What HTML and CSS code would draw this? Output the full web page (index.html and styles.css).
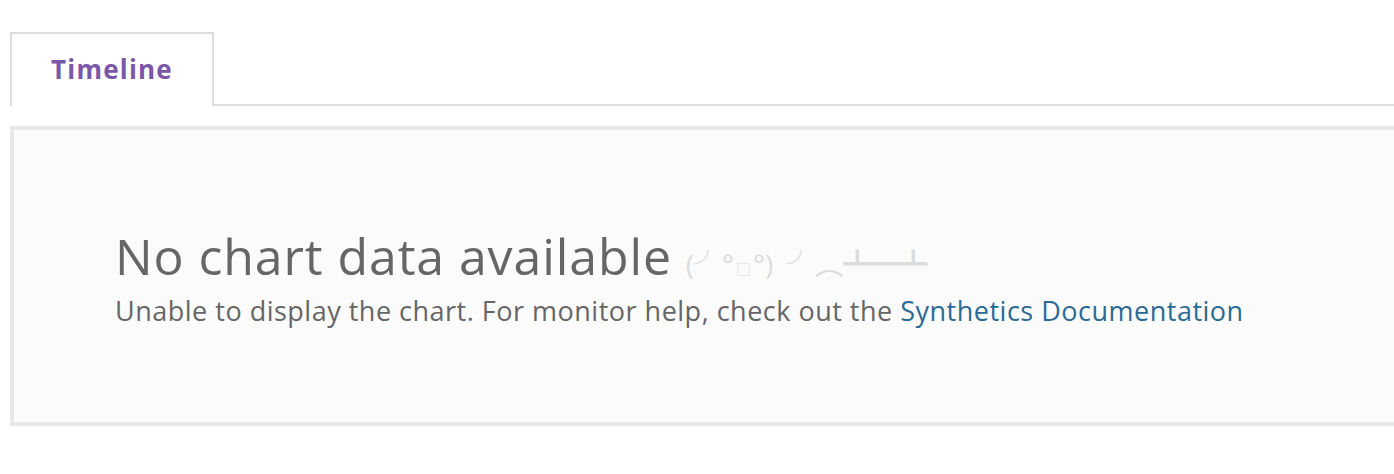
FILE: index.html
```html
<!DOCTYPE html>
<html>
<head>
<meta charset="utf-8">
<link rel="stylesheet" href="styles.css">
</head>
<body>
<div class="page">
  <div class="tabs">
    <div class="tab">Timeline</div>
    <div class="tabs-rest"></div>
  </div>
  <div class="panel">
    <div class="empty">
      <div class="empty-title">No chart data available <span class="kaomoji">(╯°<span class="kaomoji-box">□</span>°)<span class="kaomoji-table">╯︵┻━┻</span></span></div>
      <div class="empty-text">Unable to display the chart. For monitor help, check out the <a class="link" href="#">Synthetics Documentation</a></div>
    </div>
  </div>
</div>
</body>
</html>
```
FILE: styles.css
```css
html, body {
  margin: 0;
  padding: 0;
  background: #fff;
  overflow: hidden;
}
.page {
  font-family: "Open Sans", "Noto Sans", sans-serif;
  padding: 32px 0 0 10px;
  width: 1420px;
}
.tabs {
  display: flex;
  align-items: flex-end;
}
.tab {
  box-sizing: border-box;
  width: 204px;
  height: 74px;
  border: 2px solid #dddddd;
  border-bottom: none;
  display: flex;
  align-items: center;
  justify-content: center;
  padding-bottom: 2px;
  color: #7b57a8;
  font-weight: 700;
  font-size: 26px;
  letter-spacing: 1.2px;
}
.tabs-rest {
  flex: 1;
  border-bottom: 2px solid #dddddd;
}
.panel {
  margin-top: 20px;
  box-sizing: border-box;
  height: 300px;
  border: 4px solid #e8e8e8;
  background: #fbfbfb;
  padding: 96px 0 0 101px;
}
.empty-title {
  color: #666666;
  font-size: 50px;
  line-height: 60px;
  letter-spacing: 0.9px;
  white-space: nowrap;
}
.kaomoji {
  color: #dcdcdc;
  font-size: 28px;
  line-height: 1;
  letter-spacing: 0;
  font-family: "Open Sans", "Noto Sans CJK JP", sans-serif;
}
.kaomoji-box {
  font-size: 15px;
  padding: 0 2px;
}
.kaomoji-table {
  margin-left: 14px;
}
.empty-text {
  margin-top: 8px;
  color: #666666;
  font-size: 27px;
  line-height: 34px;
  letter-spacing: 0.5px;
  white-space: nowrap;
}
.link {
  color: #2b6a94;
  text-decoration: none;
}
```
